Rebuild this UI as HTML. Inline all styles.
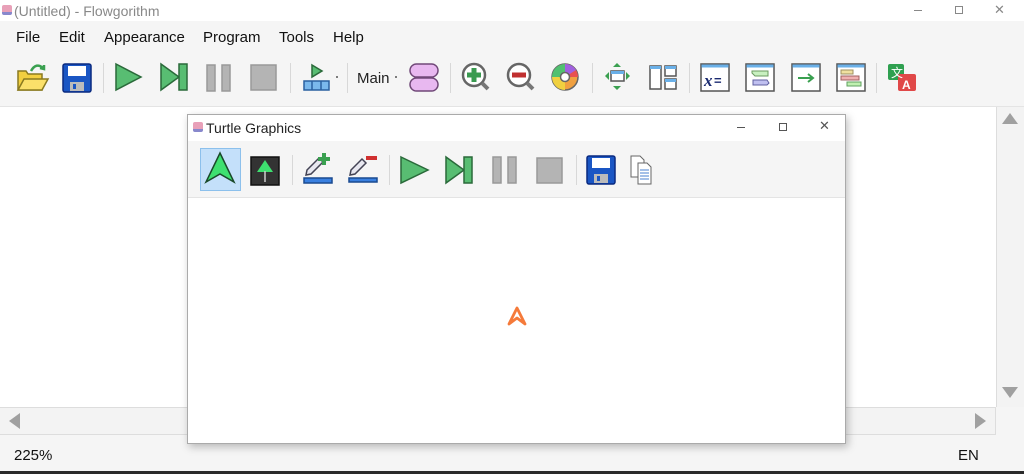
<!DOCTYPE html>
<html><head><meta charset="utf-8"><style>
*{margin:0;padding:0;box-sizing:border-box}
body{width:1024px;height:474px;overflow:hidden;background:#f5f5f5;font-family:"Liberation Sans",sans-serif;position:relative}
.a{position:absolute}
.t{font-size:14px;color:#333}
.m{font-size:15px;color:#111}
.sep{position:absolute;width:1px;background:#d8d8d8}
</style></head><body>
<div class="a" style="left:0;top:0;width:1024px;height:21px;background:#fff"></div>
<div class="a" style="left:2px;top:5px;width:10px;height:10px;background:#e8a0b8;border-radius:2px;border-bottom:3px solid #8888cc"></div>
<div class="a t" style="left:14px;top:3px;color:#888">(Untitled) - Flowgorithm</div>
<div class="a" style="left:914px;top:10px;width:8px;height:1px;background:#888"></div>
<div class="a" style="left:955px;top:6px;width:8px;height:8px;border:1px solid #888"></div>
<div class="a" style="left:994px;top:2px;font-size:13px;color:#888">✕</div>
<div class="a m" style="left:16px;top:29px">File</div>
<div class="a m" style="left:59px;top:29px">Edit</div>
<div class="a m" style="left:104px;top:29px">Appearance</div>
<div class="a m" style="left:203px;top:29px">Program</div>
<div class="a m" style="left:279px;top:29px">Tools</div>
<div class="a m" style="left:333px;top:29px">Help</div>
<svg class="a" style="left:0;top:55px" width="1024" height="50">
<g stroke-width="1.5">
<path d="M18 35 L18 16 L26 16 L28 19 L42 19 L42 35Z" fill="#f2cf40" stroke="#8a7a20"/>
<path d="M18 35 L24 24 L48 24 L42 35Z" fill="#fbe06a" stroke="#8a7a20"/>
<path d="M31 16 Q36 7 43 13 M40 13 L44 14 L44 10" fill="none" stroke="#3aa050" stroke-width="2.5"/>
<rect x="63" y="9" width="28" height="28" rx="2" fill="#1a56c4" stroke="#0a2a80"/>
<rect x="68" y="11" width="18" height="10" fill="#fff"/>
<rect x="70" y="27" width="14" height="9" fill="#bbb"/>
<rect x="73" y="29" width="3" height="5" fill="#1a56c4"/>
<path d="M116 9 L141 22 L116 35Z" fill="#58bd72" stroke="#2a6a3a"/>
<path d="M161 9 L179 22 L161 35Z" fill="#58bd72" stroke="#2a6a3a"/>
<rect x="179" y="9" width="8" height="26" fill="#58bd72" stroke="#2a6a3a"/>
<rect x="207" y="10" width="8" height="26" fill="#b4b4b4" stroke="#999"/>
<rect x="222" y="10" width="8" height="26" fill="#b4b4b4" stroke="#999"/>
<rect x="251" y="10" width="25" height="25" fill="#b4b4b4" stroke="#999"/>
<path d="M312 10 L322 16 L312 22Z" fill="#58bd72" stroke="#2a6a3a"/>
<rect x="304" y="26" width="25" height="9" fill="#7ab8ec" stroke="#2a60a0"/>
<line x1="312" y1="26" x2="312" y2="35" stroke="#2a60a0"/><line x1="321" y1="26" x2="321" y2="35" stroke="#2a60a0"/>
<rect x="410" y="9" width="28" height="13" rx="6.5" fill="#e8b8f0" stroke="#704878"/>
<rect x="410" y="23" width="28" height="13" rx="6.5" fill="#e8b8f0" stroke="#704878"/>
<circle cx="474" cy="20" r="11" fill="#fff" stroke="#666" stroke-width="2.5"/><line x1="482" y1="28" x2="488" y2="34" stroke="#777" stroke-width="4"/>
<path d="M474 13 V27 M467 20 H481" stroke="#3a9a50" stroke-width="5"/>
<circle cx="519" cy="20" r="11" fill="#fff" stroke="#666" stroke-width="2.5"/><line x1="527" y1="28" x2="533" y2="34" stroke="#777" stroke-width="4"/>
<path d="M512 20 H526" stroke="#c03030" stroke-width="5"/>
<circle cx="565" cy="22" r="13" fill="#f0a040" stroke="#666"/>
<path d="M565 22 L565 9 A13 13 0 0 1 578 22Z" fill="#e85050"/><path d="M565 22 L565 35 A13 13 0 0 1 552 22Z" fill="#f0d040"/><path d="M565 22 L565 9 A13 13 0 0 0 552 22Z" fill="#50c070"/><path d="M565 9 A13 13 0 0 1 576 15 L565 22Z" fill="#a060e0"/>
<circle cx="565" cy="22" r="4.5" fill="#fff" stroke="#666"/>
<rect x="611" y="16" width="13" height="10" fill="#fff" stroke="#555"/><rect x="611" y="16" width="13" height="3" fill="#6ab0e8"/>
<path d="M617 8 L621 12 H613Z M617 35 L621 31 H613Z M605 21 L609 17 V25Z M630 21 L626 17 V25Z" fill="#3aa050"/>
<rect x="650" y="11" width="11" height="23" fill="#fff" stroke="#555"/><rect x="665" y="11" width="11" height="10" fill="#fff" stroke="#555"/><rect x="665" y="24" width="11" height="10" fill="#fff" stroke="#555"/>
<rect x="650" y="11" width="11" height="3" fill="#6ab0e8"/><rect x="665" y="11" width="11" height="3" fill="#6ab0e8"/><rect x="665" y="24" width="11" height="3" fill="#6ab0e8"/>
<g fill="#fff" stroke="#555">
<rect x="701" y="9" width="28" height="27"/><rect x="746" y="9" width="28" height="27"/><rect x="792" y="9" width="28" height="27"/><rect x="837" y="9" width="28" height="27"/>
</g>
<g fill="#6ab0e8"><rect x="701.5" y="9.5" width="27" height="3"/><rect x="746.5" y="9.5" width="27" height="3"/><rect x="792.5" y="9.5" width="27" height="3"/><rect x="837.5" y="9.5" width="27" height="3"/></g>
<path d="M752 16 H768 V21 H755 L752 18Z" fill="#c8f0c0" stroke="#6a9a60" stroke-width="1"/>
<path d="M753 25 H767 L769 28 L767 30 H753Z" fill="#c0c0f0" stroke="#6060a0" stroke-width="1"/>
<path d="M798 23 H812 M808 19 L813 23 L808 27" stroke="#3aa050" stroke-width="2" fill="none"/>
<rect x="841" y="15" width="12" height="4" fill="#f0e0a0" stroke="#a09060" stroke-width="1"/>
<rect x="841" y="21" width="18" height="4" fill="#f0b0b0" stroke="#a06060" stroke-width="1"/>
<rect x="847" y="27" width="14" height="4" fill="#c0f0b0" stroke="#60a060" stroke-width="1"/>
<rect x="888" y="9" width="16" height="16" rx="2" fill="#2fa050"/>
<rect x="898" y="19" width="18" height="17" rx="2" fill="#e04848"/>
</g>
<text x="704" y="31" font-size="17" fill="#1a2a70" font-family="Liberation Serif" font-style="italic" font-weight="bold">x</text>
<text x="714" y="30" font-size="13" fill="#1a2a70" font-family="Liberation Sans" font-weight="bold">=</text>
<text x="891" y="22" font-size="12" fill="#fff" font-family="Noto Sans CJK SC">文</text>
<text x="902" y="34" font-size="12" fill="#fff" font-family="Liberation Sans" font-weight="bold">A</text>
<circle cx="337" cy="22" r="1" fill="#555"/>
<circle cx="396" cy="22" r="1" fill="#555"/>
</svg>
<div class="a" style="left:357px;top:70px;font-size:15px;color:#222">Main</div>
<div class="sep" style="left:103px;top:63px;height:30px"></div>
<div class="sep" style="left:290px;top:63px;height:30px"></div>
<div class="sep" style="left:347px;top:63px;height:30px"></div>
<div class="sep" style="left:450px;top:63px;height:30px"></div>
<div class="sep" style="left:592px;top:63px;height:30px"></div>
<div class="sep" style="left:689px;top:63px;height:30px"></div>
<div class="sep" style="left:876px;top:63px;height:30px"></div>
<div class="a" style="left:0;top:106px;width:1024px;height:1px;background:#e4e4e4"></div>
<div class="a" style="left:0;top:107px;width:996px;height:300px;background:#fff"></div>
<div class="a" style="left:996px;top:107px;width:28px;height:300px;background:#f3f3f3;border-left:1px solid #ddd"></div>
<div class="a" style="left:1002px;top:113px;width:0;height:0;border-left:8px solid transparent;border-right:8px solid transparent;border-bottom:11px solid #a0a0a0"></div>
<div class="a" style="left:1002px;top:387px;width:0;height:0;border-left:8px solid transparent;border-right:8px solid transparent;border-top:11px solid #a0a0a0"></div>
<div class="a" style="left:0;top:407px;width:996px;height:28px;background:#f3f3f3;border-top:1px solid #ddd;border-bottom:1px solid #ddd;border-right:1px solid #ddd"></div>
<div class="a" style="left:9px;top:413px;width:0;height:0;border-top:8px solid transparent;border-bottom:8px solid transparent;border-right:11px solid #a0a0a0"></div>
<div class="a" style="left:975px;top:413px;width:0;height:0;border-top:8px solid transparent;border-bottom:8px solid transparent;border-left:11px solid #a0a0a0"></div>
<div class="a" style="left:14px;top:447px;font-size:15px;color:#111">225%</div>
<div class="a" style="left:958px;top:447px;font-size:15px;color:#111">EN</div>
<div class="a" style="left:0;top:471px;width:1024px;height:3px;background:#2a2a2a"></div>
<div class="a" style="left:187px;top:114px;width:659px;height:330px;background:#fff;border:1px solid #aaa;box-shadow:2px 3px 8px rgba(0,0,0,.25)">
 <div class="a" style="left:5px;top:7px;width:10px;height:10px;background:#e8a0b8;border-radius:2px;border-bottom:3px solid #8888cc"></div>
 <div class="a t" style="left:18px;top:5px;color:#222">Turtle Graphics</div>
 <div class="a" style="left:549px;top:12px;width:8px;height:1px;background:#555"></div>
 <div class="a" style="left:591px;top:8px;width:8px;height:8px;border:1px solid #555"></div>
 <div class="a" style="left:631px;top:3px;font-size:13px;color:#555">✕</div>
 <div class="a" style="left:0;top:26px;width:657px;height:57px;background:#f5f5f5;border-bottom:1px solid #e4e4e4"></div>
 <div class="a" style="left:12px;top:33px;width:41px;height:43px;background:#c4e0fa;border:1px solid #8cc0ec"></div>
 <div class="sep" style="left:104px;top:40px;height:30px"></div>
 <div class="sep" style="left:201px;top:40px;height:30px"></div>
 <div class="sep" style="left:388px;top:40px;height:30px"></div>
 <svg class="a" style="left:0;top:26px" width="657" height="57" stroke-width="1.5">
  <path d="M32 12 L46 41 L32 33 L18 41Z" fill="#3ee070" stroke="#1a4a2a"/>
  <rect x="63" y="16" width="28" height="28" fill="#333" stroke="#111"/>
  <path d="M77 19 L85 31 H69Z" fill="#3ee070"/><line x1="77" y1="30" x2="77" y2="41" stroke="#ccc"/>
  <rect x="116" y="37" width="28" height="5" fill="#3a80e0" stroke="#1a4a90"/>
  <path d="M119 29 L131 17 L135 21 L123 33 L118 34Z" fill="#e8e8f0" stroke="#445"/>
  <path d="M136 12 V24 M130 18 H142" stroke="#3aa050" stroke-width="4"/>
  <rect x="161" y="37" width="28" height="4" fill="#3a80e0" stroke="#1a4a90"/>
  <path d="M163 29 L174 18 L178 22 L167 33 L162 34Z" fill="#e8e8f0" stroke="#445"/>
  <rect x="178" y="15" width="11" height="4" fill="#d03030"/>
  <path d="M213 16 L240 29 L213 42Z" fill="#58bd72" stroke="#2a6a3a"/>
  <path d="M258 16 L276 29 L258 42Z" fill="#58bd72" stroke="#2a6a3a"/>
  <rect x="276" y="16" width="8" height="26" fill="#58bd72" stroke="#2a6a3a"/>
  <rect x="305" y="16" width="8" height="26" fill="#b4b4b4" stroke="#999"/>
  <rect x="320" y="16" width="8" height="26" fill="#b4b4b4" stroke="#999"/>
  <rect x="349" y="17" width="25" height="25" fill="#b4b4b4" stroke="#999"/>
  <rect x="399" y="15" width="28" height="28" rx="2" fill="#1a56c4" stroke="#0a2a80"/>
  <rect x="404" y="17" width="18" height="10" fill="#fff"/><rect x="406" y="33" width="14" height="9" fill="#bbb"/>
  <rect x="409" y="35" width="3" height="5" fill="#1a56c4"/>
  <path d="M443 15 H452 L456 19 V36 H443Z" fill="#fff" stroke="#666" stroke-width="1"/>
  <path d="M450 22 H459 L463 26 V43 H450Z" fill="#fff" stroke="#666" stroke-width="1"/>
  <path d="M452 29 H461 M452 32 H461 M452 35 H461 M452 38 H461" stroke="#4a80d0" stroke-width="1"/>
 </svg>
 <svg class="a" style="left:316px;top:189px" width="26" height="26">
  <path d="M13 4 L21 20 L13 14 L5 20Z" fill="none" stroke="#f57a3a" stroke-width="2.8" stroke-linejoin="round"/>
 </svg>
</div>
</body></html>
